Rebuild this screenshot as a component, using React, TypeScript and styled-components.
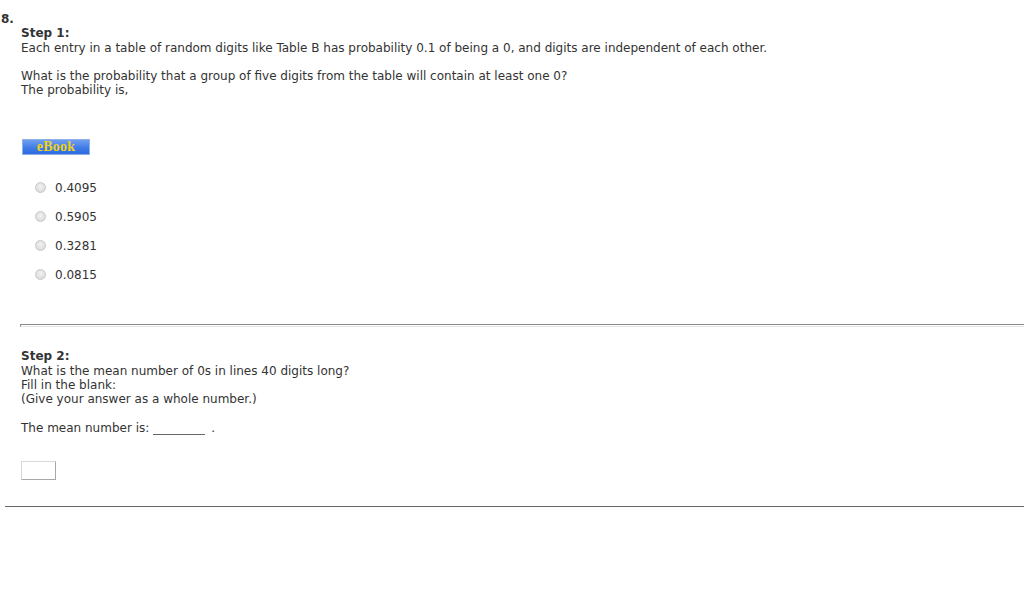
import React from "react";
import styled, { createGlobalStyle } from "styled-components";

const Global = createGlobalStyle`
  html, body { margin: 0; padding: 0; background: #fff; }
  body { font-family: "DejaVu Sans", Verdana, sans-serif; font-size: 12px; color: #333; }
`;

const Page = styled.div`
  width: 1024px;
  height: 589px;
  position: relative;
  overflow: hidden;
`;

const Question = styled.div`
  padding-top: 12px;
  padding-left: 1px;
`;

const Number = styled.div`
  font-weight: bold;
  font-size: 12px;
  line-height: 14px;
`;

const Body = styled.div`
  margin-left: 20px;
`;

const Step = styled.div<{ $top?: number }>`
  line-height: 14px;
  margin-top: ${(p) => p.$top ?? 0}px;
`;

const StepTitle = styled.div`
  font-weight: bold;
  line-height: 15px;
`;

const Line = styled.div<{ $gap?: number }>`
  line-height: 14px;
  margin-top: ${(p) => p.$gap ?? 0}px;
  white-space: pre;
`;

const EbookButton = styled.button`
  display: block;
  margin: 42px 0 0 1px;
  width: 68px;
  height: 16px;
  padding: 0;
  border: 1px solid #8fb0e8;
  background: linear-gradient(#6f9ef0, #3d7ae6 60%, #2f6bde);
  color: #f0d020;
  font-family: "Liberation Serif", "Times New Roman", serif;
  font-size: 14px;
  line-height: 14px;
  font-weight: bold;
  letter-spacing: 0.2px;
`;

const Options = styled.div`
  margin-top: 26px;
  margin-left: 14px;
  display: flex;
  flex-direction: column;
  gap: 15px;
`;

const Option = styled.label`
  display: flex;
  align-items: center;
  height: 14px;
  line-height: 14px;
`;

const Radio = styled.span`
  width: 11px;
  height: 11px;
  border-radius: 50%;
  box-sizing: border-box;
  border: 1px solid #c8c8c8;
  background: radial-gradient(circle at 50% 40%, #f2f2f2, #d4d4d4);
  margin-right: 9px;
  margin-top: -1px;
`;

const Divider = styled.div`
  margin-top: 42px;
  margin-left: -1px;
  height: 1px;
  border-top: 1px solid #8a8a8a;
  border-bottom: 1px solid #e4e4e4;
  border-left: 1px solid #8a8a8a;
`;

const Blank = styled.span`
  display: inline-block;
  width: 52px;
  border-bottom: 1px solid #666;
  height: 12px;
  vertical-align: -3px;
  margin: 0 6px 0 4px;
`;

const AnswerBox = styled.input`
  display: block;
  box-sizing: border-box;
  width: 35px;
  height: 19px;
  margin-top: 26px;
  border: 1px solid #d8d8d8;
  border-right-color: #a8a8a8;
  border-bottom-color: #a8a8a8;
  padding: 0;
  background: #fff;
`;

const BottomRule = styled.div`
  margin: 26px 0 0 -16px;
  height: 0;
  border-top: 1px solid #666;
`;

export default function App() {
  const options = ["0.4095", "0.5905", "0.3281", "0.0815"];
  return (
    <Page>
      <Global />
      <Question>
        <Number>8.</Number>
        <Body>
          <Step>
            <StepTitle>Step 1:</StepTitle>
            <Line>Each entry in a table of random digits like Table B has probability 0.1 of being a 0, and digits are independent of each other.</Line>
            <Line $gap={14}>What is the probability that a group of five digits from the table will contain at least one 0?</Line>
            <Line>The probability is,</Line>
          </Step>
          <EbookButton>eBook</EbookButton>
          <Options>
            {options.map((o) => (
              <Option key={o}>
                <Radio />
                {o}
              </Option>
            ))}
          </Options>
          <Divider />
          <Step $top={22}>
            <StepTitle>Step 2:</StepTitle>
            <Line>What is the mean number of 0s in lines 40 digits long?</Line>
            <Line>Fill in the blank:</Line>
            <Line>(Give your answer as a whole number.)</Line>
            <Line $gap={15}>
              The mean number is:<Blank />.
            </Line>
          </Step>
          <AnswerBox />
          <BottomRule />
        </Body>
      </Question>
    </Page>
  );
}
